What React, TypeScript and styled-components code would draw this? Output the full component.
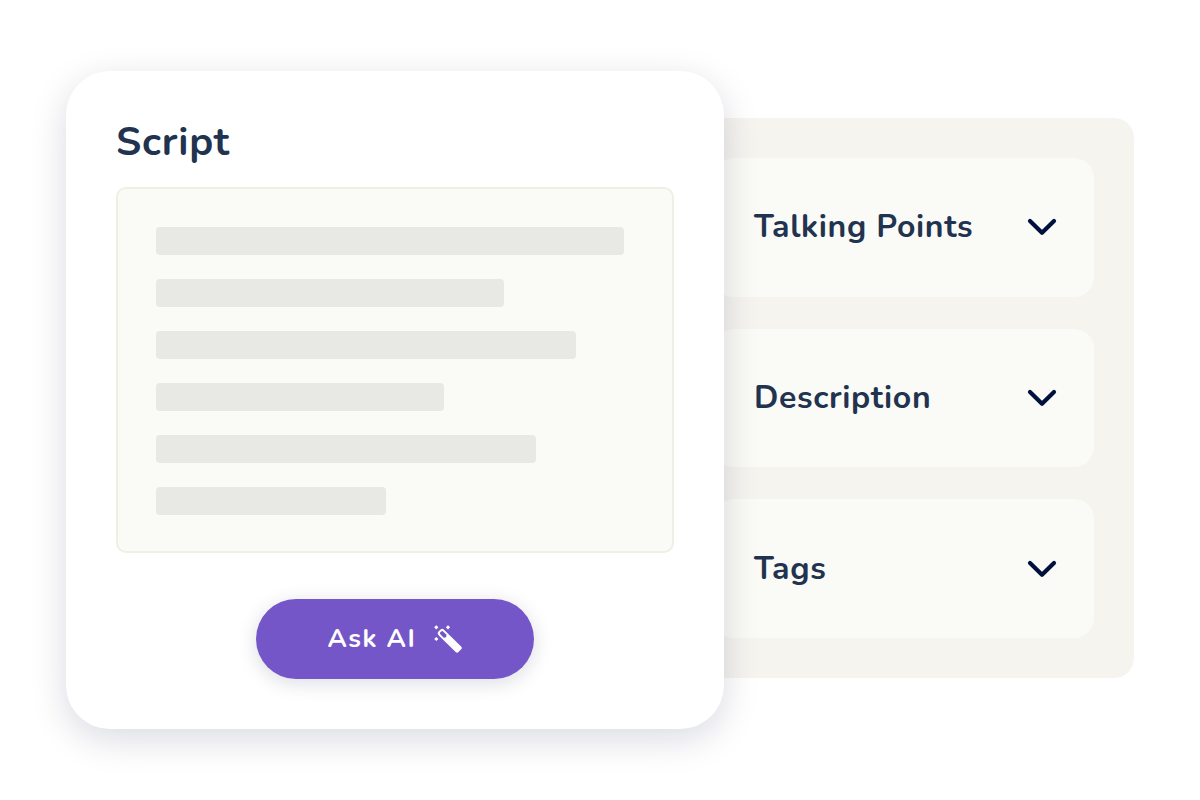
import React from "react";
import styled, { createGlobalStyle } from "styled-components";

const GlobalStyle = createGlobalStyle`
  *, *::before, *::after { box-sizing: border-box; }
  body {
    margin: 0;
    background: #ffffff;
    color: #21334f;
    font-family: Nunito, "Open Sans", "Noto Sans", sans-serif;
  }
`;

const Page = styled.main`
  min-height: 100vh;
  padding: 40px 66px;
  display: flex;
  align-items: center;
  justify-content: center;
`;

const Card = styled.section`
  position: relative;
  z-index: 1;
  flex: 0 1 658px;
  min-width: 0;
  padding: 50px;
  display: flex;
  flex-direction: column;
  border-radius: 44px;
  background: #ffffff;
  box-shadow: 0 10px 36px rgba(0, 16, 61, 0.15);
`;

const Title = styled.h1`
  margin: 0 0 24px;
  font-size: 40px;
  line-height: 42px;
  font-weight: 700;
  letter-spacing: 0.02em;
`;

const ScriptBox = styled.div`
  padding: 38px 38px 36px;
  display: flex;
  flex-direction: column;
  gap: 24px;
  border: 2px solid #f1efe3;
  border-radius: 10px;
  background: #fafbf6;
`;

const Line = styled.div<{ $width: number }>`
  width: ${(p) => p.$width}px;
  max-width: 100%;
  height: 28px;
  border-radius: 4px;
  background: #e8e9e4;
`;

const AskButton = styled.button`
  align-self: center;
  width: 278px;
  max-width: 100%;
  height: 80px;
  margin-top: 46px;
  padding: 0;
  display: flex;
  align-items: center;
  justify-content: center;
  gap: 18px;
  border: 0;
  border-radius: 40px;
  background: #7556c8;
  color: #ffffff;
  font: inherit;
  font-size: 26px;
  line-height: 32px;
  font-weight: 700;
  letter-spacing: 0.06em;
  box-shadow: 0 4px 20px rgba(0, 16, 61, 0.14);
  cursor: pointer;
`;

const Panel = styled.aside`
  flex: 0 1 460px;
  min-width: 0;
  min-height: 560px;
  margin: 0 0 4px -50px;
  padding: 40px;
  display: flex;
  flex-direction: column;
  gap: 32px;
  border-radius: 20px;
  background: #f5f4ef;
`;

const Row = styled.button`
  flex: 1;
  padding: 0 36px 0 40px;
  display: flex;
  align-items: center;
  justify-content: space-between;
  border: 0;
  border-radius: 20px;
  background: #fafbf6;
  color: inherit;
  font: inherit;
  font-size: 32px;
  line-height: 40px;
  font-weight: 700;
  letter-spacing: 0.02em;
  text-align: left;
  white-space: nowrap;
  cursor: pointer;
`;

const Chevron = () => (
  <svg width="32" height="32" viewBox="0 0 32 32" fill="none" aria-hidden="true">
    <path
      d="M4 10 L16 21.8 L28 10"
      stroke="#00113d"
      strokeWidth="4.2"
      strokeLinecap="round"
      strokeLinejoin="round"
    />
  </svg>
);

const Wand = () => (
  <svg width="28" height="28" viewBox="0 0 28 28" fill="#ffffff" aria-hidden="true">
    <path d="M2.3 0.2 L4.4 2.3 L2.3 4.4 L0.2 2.3 Z" />
    <path d="M14 0.2 L16.1 2.3 L14 4.4 L11.9 2.3 Z" />
    <path d="M2.3 11.9 L4.4 14 L2.3 16.1 L0.2 14 Z" />
    <g transform="translate(5.4 5.6) rotate(44.5)">
      <path
        fillRule="evenodd"
        d="M3 -3.9 H26.6 Q28.6 -3.9 28.6 -1.9 V1.9 Q28.6 3.9 26.6 3.9 H3 Q0 3.9 0 1 V-1 Q0 -3.9 3 -3.9 Z M3.6 -2 Q1.9 -2 1.9 -0.6 V0.6 Q1.9 2 3.6 2 H8 L9.4 0 L8 -2 Z"
      />
    </g>
  </svg>
);

const lineWidths = [468, 348, 420, 288, 380, 230];
const sections = ["Talking Points", "Description", "Tags"];

export default function App() {
  return (
    <>
      <GlobalStyle />
      <Page>
        <Card>
          <Title>Script</Title>
          <ScriptBox>
            {lineWidths.map((width) => (
              <Line key={width} $width={width} />
            ))}
          </ScriptBox>
          <AskButton type="button">
            Ask AI
            <Wand />
          </AskButton>
        </Card>
        <Panel>
          {sections.map((name) => (
            <Row key={name} type="button" aria-expanded={false}>
              {name}
              <Chevron />
            </Row>
          ))}
        </Panel>
      </Page>
    </>
  );
}
